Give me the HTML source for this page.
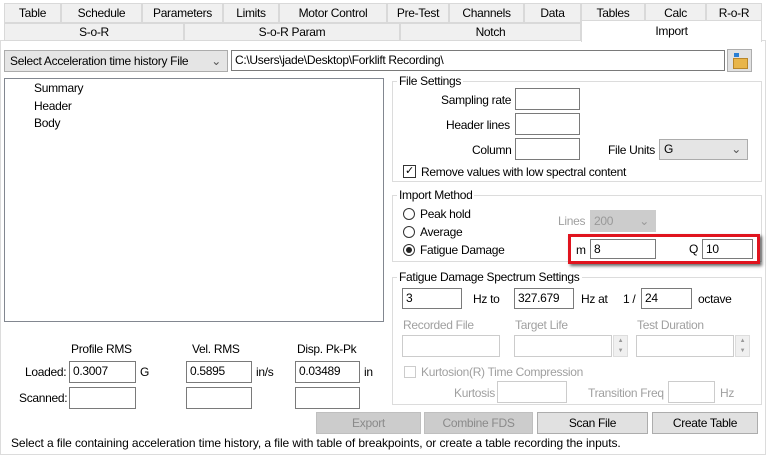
<!DOCTYPE html><html><head><style>
body{margin:0;width:768px;height:457px;background:#fff;font-family:"Liberation Sans",sans-serif;font-size:12px;color:#000;position:relative;overflow:hidden;letter-spacing:-0.3px}
.a{position:absolute;white-space:nowrap}
.tab{position:absolute;background:#f0f0f0;border:1px solid #d9d9d9;text-align:center;box-sizing:border-box;line-height:18px}
.in{position:absolute;background:#fff;border:1px solid #7a7a7a;box-sizing:border-box;padding-left:3px;line-height:18px}
.dis{border-color:#cccccc}
.grp{position:absolute;border:1px solid #dcdcdc;box-sizing:border-box}
.lg{position:absolute;background:#fff;padding:0 2px;top:-8px;left:6px;line-height:14px}
.g{color:#a0a0a0}
.btn{position:absolute;box-sizing:border-box;border:1px solid #adadad;background:#e1e1e1;text-align:center;line-height:20px}
.rad{position:absolute;width:12px;height:12px;border:1px solid #333;border-radius:50%;box-sizing:border-box;background:#fff}
</style></head><body>
<div class="a" style="left:0;top:40px;width:766px;height:415px;border:1px solid #dcdcdc;box-sizing:border-box"></div>
<div class="tab" style="left:4px;top:3px;width:57px;height:20px">Table</div>
<div class="tab" style="left:61px;top:3px;width:81px;height:20px">Schedule</div>
<div class="tab" style="left:142px;top:3px;width:81px;height:20px">Parameters</div>
<div class="tab" style="left:223px;top:3px;width:56px;height:20px">Limits</div>
<div class="tab" style="left:279px;top:3px;width:108px;height:20px">Motor Control</div>
<div class="tab" style="left:387px;top:3px;width:62px;height:20px">Pre-Test</div>
<div class="tab" style="left:449px;top:3px;width:75px;height:20px">Channels</div>
<div class="tab" style="left:524px;top:3px;width:57px;height:20px">Data</div>
<div class="tab" style="left:581px;top:3px;width:64px;height:20px">Tables</div>
<div class="tab" style="left:645px;top:3px;width:61px;height:20px">Calc</div>
<div class="tab" style="left:706px;top:3px;width:56px;height:20px">R-o-R</div>
<div class="tab" style="left:4px;top:23px;width:180px;height:18px;line-height:16px">S-o-R</div>
<div class="tab" style="left:184px;top:23px;width:216px;height:18px;line-height:16px">S-o-R Param</div>
<div class="tab" style="left:400px;top:23px;width:181px;height:18px;line-height:16px">Notch</div>
<div class="tab" style="left:581px;top:20px;width:181px;height:22px;line-height:20px;background:#fff;border-bottom:none">Import</div>

<div class="a" style="left:4px;top:50px;width:224px;height:22px;background:#e5e5e5;border:1px solid #acacac;box-sizing:border-box;line-height:20px;padding-left:5px">Select Acceleration time history File<span style="position:absolute;right:6px;color:#555">&#8964;</span></div>
<div class="in" style="left:231px;top:50px;width:494px;height:21px;line-height:19px">C:\Users\jade\Desktop\Forklift Recording\</div>
<div class="a" style="left:727px;top:49px;width:25px;height:23px;border:1px solid #adadad;background:#e1e1e1;box-sizing:border-box"><div style="position:absolute;left:5px;top:8px;width:13px;height:9px;background:#e8b54a;border:1px solid #b8862a"></div><div style="position:absolute;left:6px;top:3px;width:5px;height:4px;background:#2a7fd4"></div></div>

<div class="a" style="left:4px;top:78px;width:380px;height:244px;border:1px solid #828790;box-sizing:border-box"></div>
<div class="a" style="left:34px;top:80px;line-height:17.5px">Summary<br>Header<br>Body</div>

<div class="a" style="left:71px;top:342px">Profile RMS</div>
<div class="a" style="left:192px;top:342px">Vel. RMS</div>
<div class="a" style="left:297px;top:342px">Disp. Pk-Pk</div>
<div class="a" style="left:25px;top:365px">Loaded:</div>
<div class="in" style="left:69px;top:361px;width:67px;height:22px">0.3007</div>
<div class="a" style="left:140px;top:365px">G</div>
<div class="in" style="left:186px;top:361px;width:66px;height:22px">0.5895</div>
<div class="a" style="left:256px;top:365px">in/s</div>
<div class="in" style="left:295px;top:361px;width:65px;height:22px">0.03489</div>
<div class="a" style="left:364px;top:365px">in</div>
<div class="a" style="left:19px;top:391px">Scanned:</div>
<div class="in" style="left:69px;top:387px;width:67px;height:22px"></div>
<div class="in" style="left:186px;top:387px;width:66px;height:22px"></div>
<div class="in" style="left:295px;top:387px;width:65px;height:22px"></div>

<div class="grp" style="left:392px;top:81px;width:370px;height:101px"><span class="lg" style="left:4px">File Settings</span></div>
<div class="a" style="left:441px;top:93px">Sampling rate</div>
<div class="in" style="left:515px;top:88px;width:65px;height:22px"></div>
<div class="a" style="left:446px;top:118px">Header lines</div>
<div class="in" style="left:515px;top:113px;width:65px;height:22px"></div>
<div class="a" style="left:472px;top:143px">Column</div>
<div class="in" style="left:515px;top:138px;width:65px;height:22px"></div>
<div class="a" style="left:608px;top:143px">File Units</div>
<div class="a" style="left:659px;top:139px;width:89px;height:21px;background:#e5e5e5;border:1px solid #acacac;box-sizing:border-box;line-height:19px;padding-left:4px">G<span style="position:absolute;right:6px;color:#555">&#8964;</span></div>
<div class="a" style="left:403px;top:165px;width:13px;height:13px;border:1px solid #333;box-sizing:border-box;font-size:11px;line-height:11px;text-align:center">&#10003;</div>
<div class="a" style="left:421px;top:165px">Remove values with low spectral content</div>

<div class="grp" style="left:392px;top:195px;width:370px;height:67px"><span class="lg" style="left:4px">Import Method</span></div>
<div class="rad" style="left:403px;top:208px"></div><div class="a" style="left:420px;top:207px">Peak hold</div>
<div class="rad" style="left:403px;top:226px"></div><div class="a" style="left:420px;top:225px">Average</div>
<div class="rad" style="left:403px;top:244px"><div style="width:6px;height:6px;border-radius:50%;background:#222;margin:2px"></div></div><div class="a" style="left:420px;top:243px">Fatigue Damage</div>
<div class="a g" style="left:558px;top:214px">Lines</div>
<div class="a" style="left:590px;top:210px;width:66px;height:22px;background:#ccc;border:1px solid #ccc;box-sizing:border-box;line-height:20px;padding-left:3px;color:#999">200<span style="position:absolute;right:6px">&#8964;</span></div>
<div class="a" style="left:568px;top:234px;width:192px;height:30px;border:3px solid #e0141e;box-sizing:border-box;box-shadow:2px 2px 3px rgba(0,0,0,.6)"></div>
<div class="a" style="left:576px;top:243px">m</div>
<div class="in" style="left:590px;top:239px;width:66px;height:20px;line-height:18px">8</div>
<div class="a" style="left:689px;top:242px">Q</div>
<div class="in" style="left:702px;top:239px;width:51px;height:20px;line-height:18px">10</div>

<div class="grp" style="left:392px;top:277px;width:370px;height:128px"><span class="lg" style="left:4px">Fatigue Damage Spectrum Settings</span></div>
<div class="in" style="left:402px;top:288px;width:60px;height:21px">3</div>
<div class="a" style="left:473px;top:292px">Hz to</div>
<div class="in" style="left:514px;top:288px;width:60px;height:21px">327.679</div>
<div class="a" style="left:581px;top:292px">Hz at</div>
<div class="a" style="left:623px;top:292px">1 /</div>
<div class="in" style="left:641px;top:288px;width:51px;height:21px">24</div>
<div class="a" style="left:698px;top:292px">octave</div>
<div class="a g" style="left:403px;top:318px">Recorded File</div>
<div class="a g" style="left:515px;top:318px">Target Life</div>
<div class="a g" style="left:637px;top:318px">Test Duration</div>
<div class="in dis" style="left:402px;top:335px;width:98px;height:22px"></div>
<div class="in dis" style="left:514px;top:335px;width:98px;height:22px"></div>
<div class="a" style="left:613px;top:335px;width:15px;height:22px;background:#f0f0f0;border:1px solid #ddd;box-sizing:border-box;font-size:6px;color:#999;text-align:center;line-height:10px">&#9650;<br>&#9660;</div>
<div class="in dis" style="left:636px;top:335px;width:98px;height:22px"></div>
<div class="a" style="left:735px;top:335px;width:15px;height:22px;background:#f0f0f0;border:1px solid #ddd;box-sizing:border-box;font-size:6px;color:#999;text-align:center;line-height:10px">&#9650;<br>&#9660;</div>
<div class="a" style="left:404px;top:366px;width:12px;height:12px;border:1px solid #ccc;box-sizing:border-box"></div>
<div class="a g" style="left:421px;top:365px">Kurtosion(R) Time Compression</div>
<div class="a g" style="left:454px;top:386px">Kurtosis</div>
<div class="in dis" style="left:497px;top:381px;width:70px;height:22px"></div>
<div class="a g" style="left:588px;top:386px">Transition Freq</div>
<div class="in dis" style="left:668px;top:381px;width:47px;height:22px"></div>
<div class="a g" style="left:720px;top:386px">Hz</div>

<div class="btn" style="left:316px;top:412px;width:105px;height:22px;background:#cccccc;border-color:#bfbfbf;color:#8a8a8a">Export</div>
<div class="btn" style="left:424px;top:412px;width:109px;height:22px;background:#cccccc;border-color:#bfbfbf;color:#8a8a8a">Combine FDS</div>
<div class="btn" style="left:537px;top:412px;width:111px;height:22px">Scan File</div>
<div class="btn" style="left:652px;top:412px;width:106px;height:22px">Create Table</div>
<div class="a" style="left:11px;top:436px;letter-spacing:-0.1px">Select a file containing acceleration time history, a file with table of breakpoints, or create a table recording the inputs.</div>
</body></html>
